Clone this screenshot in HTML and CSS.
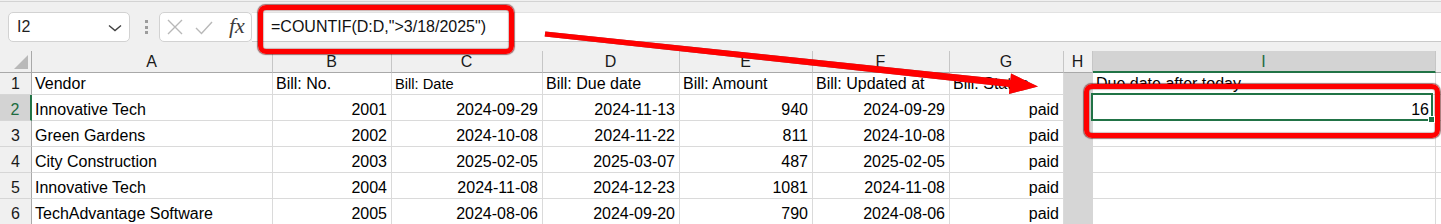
FILE: index.html
```html
<!DOCTYPE html>
<html>
<head>
<meta charset="utf-8">
<link rel="stylesheet" href="styles.css">
</head>
<body>
<div class="page">
  <div class="topbar">
    <div class="namebox">
      <span>I2</span>
      <svg class="chev" width="14" height="8" viewBox="0 0 14 8"><path d="M1 1.5 L7 6.5 L13 1.5" fill="none" stroke="#404040" stroke-width="1.4"/></svg>
    </div>
    <div class="sep"><i></i><i></i><i></i></div>
    <div class="fxbox">
      <svg class="ico-x" width="16" height="16" viewBox="0 0 16 16"><path d="M1 1 L15 15 M15 1 L1 15" stroke="#b8b8b8" stroke-width="1.4" fill="none"/></svg>
      <svg class="ico-ok" width="18" height="14" viewBox="0 0 18 14"><path d="M1 7 L6.5 12.5 L17 1" stroke="#b8b8b8" stroke-width="1.4" fill="none"/></svg>
      <span class="fx">fx</span>
    </div>
    <div class="formula">=COUNTIF(D:D,"&gt;3/18/2025")</div>
  </div>

  <div class="sheet">
    <div class="c hd corner"><svg width="14" height="14" viewBox="0 0 14 14"><path d="M14 0 L14 14 L0 14 Z" fill="#b9b9b9"/></svg></div>
    <div class="c hd">A</div>
    <div class="c hd">B</div>
    <div class="c hd">C</div>
    <div class="c hd">D</div>
    <div class="c hd">E</div>
    <div class="c hd">F</div>
    <div class="c hd">G</div>
    <div class="c hd">H</div>
    <div class="c hd hdsel">I</div>
    <div class="c hd"></div>

    <div class="c rh">1</div>
    <div class="c">Vendor</div>
    <div class="c">Bill: No.</div>
    <div class="c small">Bill: Date</div>
    <div class="c">Bill: Due date</div>
    <div class="c">Bill: Amount</div>
    <div class="c">Bill: Updated at</div>
    <div class="c">Bill: Status</div>
    <div class="c gray"></div>
    <div class="c">Due date after today</div>
    <div class="c"></div>

    <div class="c rh rhsel">2</div>
    <div class="c">Innovative Tech</div>
    <div class="c r">2001</div>
    <div class="c r">2024-09-29</div>
    <div class="c r">2024-11-13</div>
    <div class="c r">940</div>
    <div class="c r">2024-09-29</div>
    <div class="c r">paid</div>
    <div class="c gray"></div>
    <div class="c r active">16</div>
    <div class="c"></div>

    <div class="c rh">3</div>
    <div class="c">Green Gardens</div>
    <div class="c r">2002</div>
    <div class="c r">2024-10-08</div>
    <div class="c r">2024-11-22</div>
    <div class="c r">811</div>
    <div class="c r">2024-10-08</div>
    <div class="c r">paid</div>
    <div class="c gray"></div>
    <div class="c"></div>
    <div class="c"></div>

    <div class="c rh">4</div>
    <div class="c">City Construction</div>
    <div class="c r">2003</div>
    <div class="c r">2025-02-05</div>
    <div class="c r">2025-03-07</div>
    <div class="c r">487</div>
    <div class="c r">2025-02-05</div>
    <div class="c r">paid</div>
    <div class="c gray"></div>
    <div class="c"></div>
    <div class="c"></div>

    <div class="c rh">5</div>
    <div class="c">Innovative Tech</div>
    <div class="c r">2004</div>
    <div class="c r">2024-11-08</div>
    <div class="c r">2024-12-23</div>
    <div class="c r">1081</div>
    <div class="c r">2024-11-08</div>
    <div class="c r">paid</div>
    <div class="c gray"></div>
    <div class="c"></div>
    <div class="c"></div>

    <div class="c rh">6</div>
    <div class="c">TechAdvantage Software</div>
    <div class="c r">2005</div>
    <div class="c r">2024-08-06</div>
    <div class="c r">2024-09-20</div>
    <div class="c r">790</div>
    <div class="c r">2024-08-06</div>
    <div class="c r">paid</div>
    <div class="c gray"></div>
    <div class="c"></div>
    <div class="c"></div>
  </div>

  <div class="hl hl-formula"></div>
  <div class="hl hl-cell"></div>
  <svg class="arrow" width="1441" height="224" viewBox="0 0 1441 224">
    <polygon points="545.3,30.5 1010.4,78.9 1011,72.5 1038,85.5 1009,93 1009.6,85.9 544.7,35.5" fill="#ff0000"/>
  </svg>
</div>
</body>
</html>
```

FILE: styles.css
```css
* { box-sizing: border-box; }
html, body { margin: 0; padding: 0; }
body {
  width: 1441px;
  height: 224px;
  overflow: hidden;
  background: #f0f0f0;
  font-family: "Liberation Sans", Arial, sans-serif;
  color: #000;
}
.page {
  position: relative;
  width: 1441px;
  height: 224px;
}

/* ---------- formula bar ---------- */
.topbar {
  height: 50px;
  display: flex;
  align-items: flex-start;
  border-top: 1px solid #d3d3d3;
  margin-top: 1px;
  padding-top: 10px;
  background: #f0f0f0;
}
.namebox {
  margin-left: 8px;
  width: 122px;
  height: 30px;
  background: #fff;
  border: 1px solid #d2d2d2;
  border-radius: 5px;
  display: flex;
  align-items: center;
  justify-content: space-between;
  padding: 0 7px 0 8px;
  font-size: 16px;
  color: #1f1f1f;
}
.chev { display: block; margin-top: 1px; }
.sep {
  margin-left: 13px;
  width: 6px;
  height: 30px;
  display: flex;
  flex-direction: column;
  align-items: center;
  justify-content: center;
  gap: 2.5px;
}
.sep i {
  display: block;
  width: 3px;
  height: 3px;
  background: #9c9c9c;
}
.fxbox {
  margin-left: 10px;
  width: 93px;
  height: 30px;
  background: #fff;
  border: 1px solid #d2d2d2;
  border-radius: 5px;
  display: flex;
  align-items: center;
  padding-left: 7px;
}
.ico-x { display: block; }
.ico-ok { display: block; margin-left: 12px; margin-top: 1px; }
.fx {
  margin-left: 16px;
  font-family: "Liberation Serif", "Times New Roman", serif;
  font-style: italic;
  font-size: 22px;
  color: #3c3c3c;
  line-height: 1;
  margin-top: -2px;
}
.formula {
  flex: 1;
  height: 30px;
  background: #fff;
  border-top: 1px solid #e2e2e2;
  border-bottom: 1px solid #c9c9c9;
  display: flex;
  align-items: center;
  padding-left: 19px;
  font-size: 16px;
  color: #111;
}

/* ---------- grid ---------- */
.sheet {
  display: grid;
  grid-template-columns: 32px 241px 119px 151px 137px 133px 137px 114px 29px 343px 1fr;
  grid-template-rows: 22px 22px repeat(5, 26px);
  background: #fff;
}
.c {
  position: relative;
  border-right: 1px solid #dadada;
  border-bottom: 1px solid #dadada;
  font-size: 16px;
  line-height: 18px;
  display: flex;
  align-items: flex-end;
  padding: 0 4px 1px 3px;
  white-space: nowrap;
  overflow: visible;
  background: #fff;
}
.c.r { justify-content: flex-end; }
.c.small { font-size: 14.7px; }
.c.gray {
  background: #d6d6d6;
  border-right-color: #d6d6d6;
  border-bottom-color: #d6d6d6;
}
.c.hd {
  background: #f0f0f0;
  justify-content: center;
  border-right: 1px solid #c6c6c6;
  border-bottom: 1px solid #a9a9a9;
  color: #1a1a1a;
  padding-bottom: 1px;
}
.c.hd.corner {
  justify-content: flex-end;
  align-items: flex-end;
  padding: 0 3px 3px 0;
  border-right-color: #a9a9a9;
}
.corner svg { display: block; }
.c.hdsel {
  background: #d3d3d3;
  color: #1d6b40;
  border-bottom: 2px solid #217346;
  padding-bottom: 0;
}
.c.rh {
  background: #f0f0f0;
  justify-content: center;
  padding: 0 0 1px 0;
  border-right: 1px solid #a9a9a9;
  border-bottom: 1px solid #d6d6d6;
  color: #1a1a1a;
}
.c.rhsel {
  background: #d3d3d3;
  color: #1d6b40;
  border-right: 2px solid #217346;
}
.c.active { padding-right: 6px; }
.c.active::after {
  content: "";
  position: absolute;
  left: -2px;
  top: -2px;
  right: 2px;
  bottom: -1px;
  border: 2px solid #217346;
}
.c.active::before {
  content: "";
  position: absolute;
  right: 0;
  bottom: -3px;
  width: 5px;
  height: 5px;
  background: #217346;
  border: 1px solid #fff;
  z-index: 2;
}

/* ---------- annotations ---------- */
.hl {
  position: absolute;
  border: 5px solid #ff0000;
  border-radius: 8px;
  box-shadow: 0 0 1px 0.5px rgba(90, 0, 0, 0.55), inset 0 0 1px 0.5px rgba(90, 0, 0, 0.45);
  pointer-events: none;
}
.hl-formula {
  left: 258px;
  top: 4px;
  width: 256px;
  height: 49px;
}
.hl-cell {
  left: 1084px;
  top: 83px;
  width: 356px;
  height: 54px;
}
.arrow {
  position: absolute;
  left: 0;
  top: 0;
  pointer-events: none;
  filter: drop-shadow(0 0 0.6px rgba(80, 0, 0, 0.6));
}
```
